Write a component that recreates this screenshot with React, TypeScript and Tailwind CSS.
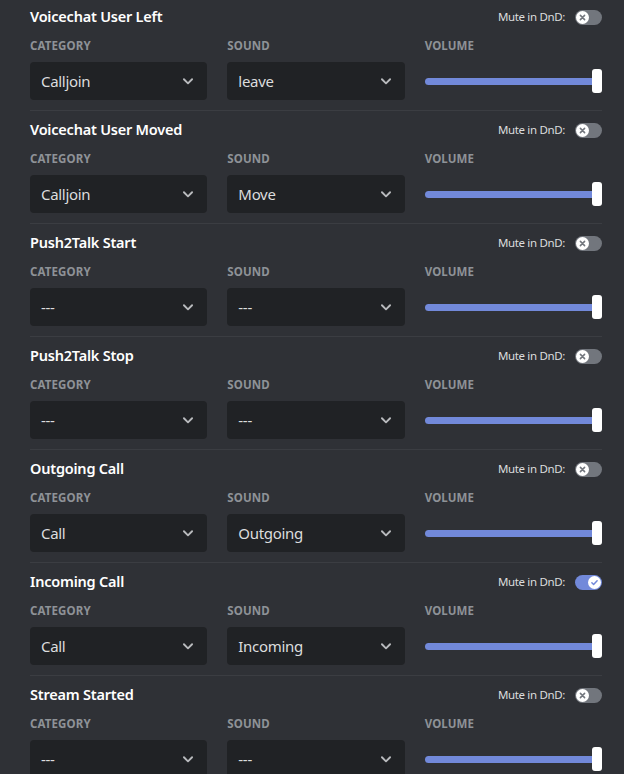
import React from "react";

type Row = { title: string; category: string; sound: string; muted: boolean };

const rows: Row[] = [
  { title: "Voicechat User Left", category: "Calljoin", sound: "leave", muted: false },
  { title: "Voicechat User Moved", category: "Calljoin", sound: "Move", muted: false },
  { title: "Push2Talk Start", category: "---", sound: "---", muted: false },
  { title: "Push2Talk Stop", category: "---", sound: "---", muted: false },
  { title: "Outgoing Call", category: "Call", sound: "Outgoing", muted: false },
  { title: "Incoming Call", category: "Call", sound: "Incoming", muted: true },
  { title: "Stream Started", category: "---", sound: "---", muted: false },
];

function Chevron() {
  return (
    <svg width="14" height="14" viewBox="0 0 24 24" fill="none" stroke="#b9bbbe" strokeWidth="3.2" strokeLinecap="round" strokeLinejoin="round">
      <path d="M5 9l7 7 7-7" />
    </svg>
  );
}

function Toggle({ on }: { on: boolean }) {
  return (
    <div className={on ? "relative w-[27px] h-[15px] rounded-full bg-[#7289da]" : "relative w-[27px] h-[15px] rounded-full bg-[#72767d]"}>
      <div className={on ? "absolute top-[1px] right-[1px] w-[13px] h-[13px] rounded-full bg-white flex items-center justify-center" : "absolute top-[1px] left-[1px] w-[13px] h-[13px] rounded-full bg-white flex items-center justify-center"}>
        {on ? (
          <svg width="9" height="9" viewBox="0 0 12 12" fill="none" stroke="#7289da" strokeWidth="2" strokeLinecap="round" strokeLinejoin="round">
            <path d="M2.5 6.3l2.3 2.3L9.5 3.6" />
          </svg>
        ) : (
          <svg width="7" height="7" viewBox="0 0 10 10" fill="none" stroke="#72767d" strokeWidth="2.2" strokeLinecap="round">
            <path d="M2 2l6 6M8 2l-6 6" />
          </svg>
        )}
      </div>
    </div>
  );
}

function Select({ value }: { value: string }) {
  return (
    <div className="h-[38px] rounded-[4px] bg-[#202225] flex items-center justify-between pl-[11px] pr-[12px]">
      <span className="text-[15px] tracking-[-0.02em] text-[#dcddde]">{value}</span>
      <Chevron />
    </div>
  );
}

function Section({ row }: { row: Row }) {
  return (
    <div className="pt-[9px] pb-[10px] border-b border-[#3b3d42]">
      <div className="h-5 flex items-center justify-between">
        <span className="text-[14.5px] font-semibold tracking-[-0.015em] text-white">{row.title}</span>
        <div className="flex items-center gap-[10px]">
          <span className="text-[11.5px] tracking-[-0.03em] text-[#dcddde]">Mute in DnD:</span>
          <Toggle on={row.muted} />
        </div>
      </div>
      <div className="grid grid-cols-3 gap-x-5 mt-[13px]">
        <div className="text-[11.5px] leading-[12px] font-bold text-[#8e9297] tracking-[0.01em]">CATEGORY</div>
        <div className="text-[11.5px] leading-[12px] font-bold text-[#8e9297] tracking-[0.01em]">SOUND</div>
        <div className="text-[11.5px] leading-[12px] font-bold text-[#8e9297] tracking-[0.01em]">VOLUME</div>
      </div>
      <div className="grid grid-cols-3 gap-x-5 mt-[10px]">
        <Select value={row.category} />
        <Select value={row.sound} />
        <div className="h-[38px] flex items-center">
          <div className="flex-1 h-[7px] rounded-l-full bg-[#7289da]" />
          <div className="w-[10px] h-[24px] rounded-[3px] bg-white" />
        </div>
      </div>
    </div>
  );
}

export default function App() {
  return (
    <div className="w-[624px] h-[774px] overflow-hidden bg-[#2f3136]" style={{ fontFamily: '"Noto Sans", "Open Sans", sans-serif' }}>
      <div className="pl-[30px] pr-[22px] -mt-[2px]">
        {rows.map((r) => (
          <Section key={r.title} row={r} />
        ))}
      </div>
    </div>
  );
}
